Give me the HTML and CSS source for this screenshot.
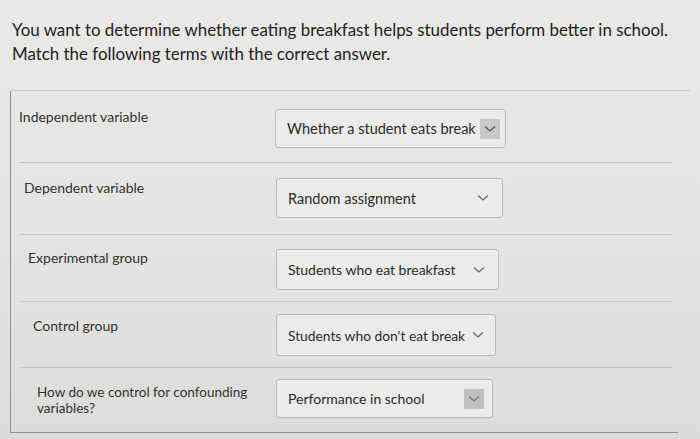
FILE: index.html
```html
<!DOCTYPE html>
<html lang="en">
<head>
<meta charset="utf-8">
<title>Matching question</title>
<link rel="stylesheet" href="styles.css">
</head>
<body>
<div class="page">
  <div class="question">
    <p class="prompt">You want to determine whether eating breakfast helps students perform better in school.<br>Match the following terms with the correct answer.</p>
  </div>
  <div class="panel">
    <div class="row r1">
      <div class="label">Independent variable</div>
      <div class="select active">
        <span class="value">Whether a student eats break</span>
        <span class="chev shaded"><svg viewBox="0 0 12 8" width="12" height="8"><path d="M1 1.5 L6 6 L11 1.5" fill="none" stroke="#555" stroke-width="1.3"/></svg></span>
      </div>
    </div>
    <div class="row r2">
      <div class="label">Dependent variable</div>
      <div class="select">
        <span class="value">Random assignment</span>
        <span class="chev"><svg viewBox="0 0 12 8" width="12" height="8"><path d="M1 1.5 L6 6 L11 1.5" fill="none" stroke="#666" stroke-width="1.2"/></svg></span>
      </div>
    </div>
    <div class="row r3">
      <div class="label">Experimental group</div>
      <div class="select">
        <span class="value">Students who eat breakfast</span>
        <span class="chev"><svg viewBox="0 0 12 8" width="12" height="8"><path d="M1 1.5 L6 6 L11 1.5" fill="none" stroke="#666" stroke-width="1.2"/></svg></span>
      </div>
    </div>
    <div class="row r4">
      <div class="label">Control group</div>
      <div class="select">
        <span class="value">Students who don't eat break</span>
        <span class="chev"><svg viewBox="0 0 12 8" width="12" height="8"><path d="M1 1.5 L6 6 L11 1.5" fill="none" stroke="#666" stroke-width="1.2"/></svg></span>
      </div>
    </div>
    <div class="row r5">
      <div class="label">How do we control for confounding variables?</div>
      <div class="select">
        <span class="value">Performance in school</span>
        <span class="chev shaded"><svg viewBox="0 0 12 8" width="12" height="8"><path d="M1 1.5 L6 6 L11 1.5" fill="none" stroke="#777" stroke-width="1.2"/></svg></span>
      </div>
    </div>
  </div>
</div>
</body>
</html>
```
FILE: styles.css
```css
* { box-sizing: border-box; }
html, body { margin: 0; padding: 0; }
body {
  width: 700px;
  height: 439px;
  overflow: hidden;
  background: linear-gradient(180deg, #e9e9e7 0%, #e4e4e2 50%, #dcdcda 100%);
  font-family: Lato, "Open Sans", sans-serif;
  color: #2f2f2f;
}
.page {
  padding: 0 10px 0 12px;
}
.question {
  padding: 18px 0 24px 0;
  border-bottom: 1px solid #cacac8;
}
.prompt {
  margin: 0;
  font-size: 16.9px;
  line-height: 24px;
  color: #222;
}
.panel {
  margin-left: -2px;
  margin-right: 12px;
  border-left: 1px solid #8f8f8d;
  border-bottom: 1px solid #8f8f8d;
  height: 342px;
}
.row {
  display: flex;
  align-items: flex-start;
  border-bottom: 1px solid #c6c6c4;
  margin-left: 8px;
  margin-right: 6px;
}
.row.r5 { border-bottom: none; }
.r1 { height: 72px; padding-top: 16px; }
.r2 { height: 72px; padding-top: 13px; }
.r3 { height: 67px; padding-top: 12px; }
.r4 { height: 66px; padding-top: 10px; }
.r5 { height: 64px; padding-top: 9px; }
.label {
  width: 256px;
  font-size: 14px;
  line-height: 16px;
  color: #333;
  padding-top: 2px;
}
.r2 .label { padding-left: 5px; width: 257px; padding-top: 4px; }
.r3 .label { padding-left: 9px; width: 257px; padding-top: 3px; }
.r4 .label { padding-left: 14px; width: 257px; padding-top: 6px; }
.r5 .label { padding-left: 18px; width: 257px; padding-top: 7px; padding-right: 4px; font-size: 13.5px; }
.select {
  display: flex;
  align-items: center;
  justify-content: space-between;
  height: 39px;
  border: 1px solid #b9b9b7;
  border-radius: 3px;
  background: #ebebe9;
  padding: 0 5px 0 11px;
  margin-top: 2px;
  font-size: 14.5px;
  color: #2a2a2a;
  white-space: nowrap;
  overflow: hidden;
}
.r1 .select { width: 231px; }
.r2 .select { width: 227px; height: 40px; }
.r3 .select { width: 223px; height: 41px; font-size: 14px; }
.r4 .select { width: 220px; height: 42px; font-size: 13.8px; }
.r5 .select { width: 217px; height: 39px; font-size: 14px; }
.value { overflow: hidden; }
.chev {
  flex: none;
  width: 20px;
  height: 20px;
  display: flex;
  align-items: center;
  justify-content: center;
  margin-left: 2px;
}
.r2 .chev, .r3 .chev { margin-right: 4px; }
.r4 .chev { margin-right: 2px; margin-left: 0; }
.chev.shaded { background: #c9c9c7; }
.r5 .chev.shaded { background: #bfbfbd; margin-right: 3px; }
```
